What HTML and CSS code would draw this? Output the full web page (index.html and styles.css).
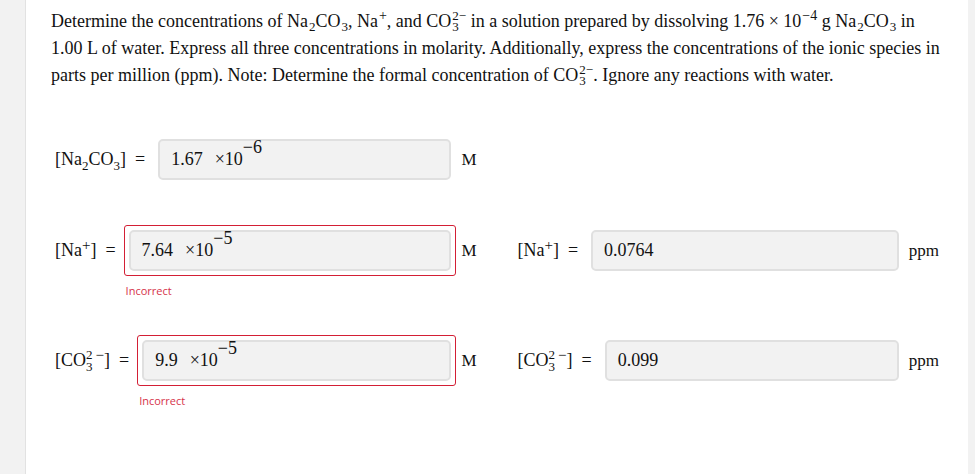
FILE: index.html
```html
<!DOCTYPE html>
<html lang="en">
<head>
  <meta charset="UTF-8" />
  <meta name="viewport" content="width=device-width, initial-scale=1.0"/>
  <title>Concentrations of Na2CO3</title>
  <link rel="stylesheet" href="styles.css">
</head>
<body>
  <div class="panel">
    <p class="question">
      Determine the concentrations of Na<sub>2</sub>CO<sub>3</sub>, Na<sup>+</sup>, and CO<span class="ss"><span>2−</span><span>3</span></span> in a solution prepared by dissolving 1.76 × 10<sup>−4</sup> g Na<sub>2</sub>CO<sub>3</sub> in 1.00 L of water. Express all three concentrations in molarity. Additionally, express the concentrations of the ionic species in parts per million (ppm). Note: Determine the formal concentration of CO<span class="ss"><span>2−</span><span>3</span></span>. Ignore any reactions with water.
    </p>

    <div class="answers">
      <!-- Na2CO3 -->
      <div class="answer-row row-first">
        <div class="field">
          <span class="label">[Na<sub>2</sub>CO<sub>3</sub>]<span class="eq">=</span></span>
          <div class="wrap">
            <div class="input">1.67<span class="sci">×10<span class="exp">−6</span></span></div>
          </div>
          <span class="unit">M</span>
        </div>
      </div>

      <!-- Na+ -->
      <div class="answer-row row-second">
        <div class="field">
          <span class="label">[Na<sup>+</sup>]<span class="eq">=</span></span>
          <div class="wrap incorrect">
            <div class="input">7.64<span class="sci">×10<span class="exp">−5</span></span></div>
          </div>
          <span class="unit">M</span>
          <div class="feedback">Incorrect</div>
        </div>
        <div class="field">
          <span class="label">[Na<sup>+</sup>]<span class="eq">=</span></span>
          <div class="wrap">
            <div class="input">0.0764</div>
          </div>
          <span class="unit">ppm</span>
        </div>
      </div>

      <!-- CO3 2- -->
      <div class="answer-row row-third">
        <div class="field">
          <span class="label">[CO<span class="ss"><span>2</span><span>3</span></span><sup class="minus">−</sup>]<span class="eq">=</span></span>
          <div class="wrap incorrect">
            <div class="input">9.9<span class="sci">×10<span class="exp">−5</span></span></div>
          </div>
          <span class="unit">M</span>
          <div class="feedback">Incorrect</div>
        </div>
        <div class="field">
          <span class="label">[CO<span class="ss"><span>2</span><span>3</span></span><sup class="minus">−</sup>]<span class="eq">=</span></span>
          <div class="wrap">
            <div class="input">0.099</div>
          </div>
          <span class="unit">ppm</span>
        </div>
      </div>
    </div>
  </div>
</body>
</html>
```

FILE: styles.css
```css
body {
  margin: 0;
  background: #f2f2f2;
  font-family: 'Liberation Serif', 'Times New Roman', serif;
  color: #111;
}

.panel {
  margin-left: 25px;
  width: 943px;
  min-height: 100vh;
  box-sizing: border-box;
  background: #fff;
  border-left: 1px solid #e2e2e2;
  padding: 8px 20px 0 25px;
}

.question {
  margin: 0;
  font-size: 18px;
  line-height: 27px;
}

sub, sup {
  font-size: 12px;
  line-height: 0;
}

sub {
  vertical-align: -4px;
}

sup {
  vertical-align: 7px;
}

.question sub,
.question sup {
  font-size: 13px;
  margin-left: 1px;
}

.question sup {
  font-size: 14px;
}

/* stacked superscript over subscript */
.ss {
  display: inline-block;
  font-size: 13px;
  line-height: 11px;
  vertical-align: -4px;
  margin-left: 1px;
}

.ss span {
  display: block;
}

.answers {
  padding: 0 9px 0 4px;
}

.answer-row {
  display: grid;
  grid-template-columns: 1fr 1fr;
  column-gap: 41px;
  align-items: start;
}

.row-first {
  margin-top: 45px;
}

.row-second {
  margin-top: 40px;
}

.row-third {
  margin-top: 37px;
}

.field {
  display: grid;
  grid-template-columns: auto 1fr auto;
  align-items: center;
  align-content: start;
  column-gap: 5px;
}

.label {
  grid-row: 1;
  font-size: 18px;
  white-space: nowrap;
}

.label sub {
  font-size: 13px;
  vertical-align: -5px;
}

.label sup {
  font-size: 15px;
  vertical-align: 6px;
}

.label .ss {
  font-size: 13px;
  line-height: 12px;
  vertical-align: -5px;
  margin-left: 0;
}

.label .minus {
  margin-left: 3px;
}

.eq {
  margin: 0 3px 0 9px;
}

.wrap {
  grid-row: 1;
  padding: 4px;
  border: 1px solid transparent;
  border-radius: 3px;
}

.wrap.incorrect {
  border-color: #d31f35;
}

.input {
  height: 41px;
  box-sizing: border-box;
  border: 2px solid #e0e0e0;
  border-radius: 5px;
  background: #f2f2f2;
  padding: 0 11px;
  font-size: 18px;
  line-height: 36px;
  white-space: nowrap;
}

.sci {
  margin-left: 12px;
}

.exp {
  vertical-align: 12px;
  line-height: 0;
}

.unit {
  grid-row: 1;
  font-size: 17px;
}

.feedback {
  grid-row: 2;
  grid-column: 2;
  margin: 7px 0 0 2px;
  font-family: 'Open Sans', sans-serif;
  font-size: 11px;
  line-height: 15px;
  color: #d6334a;
}
```
